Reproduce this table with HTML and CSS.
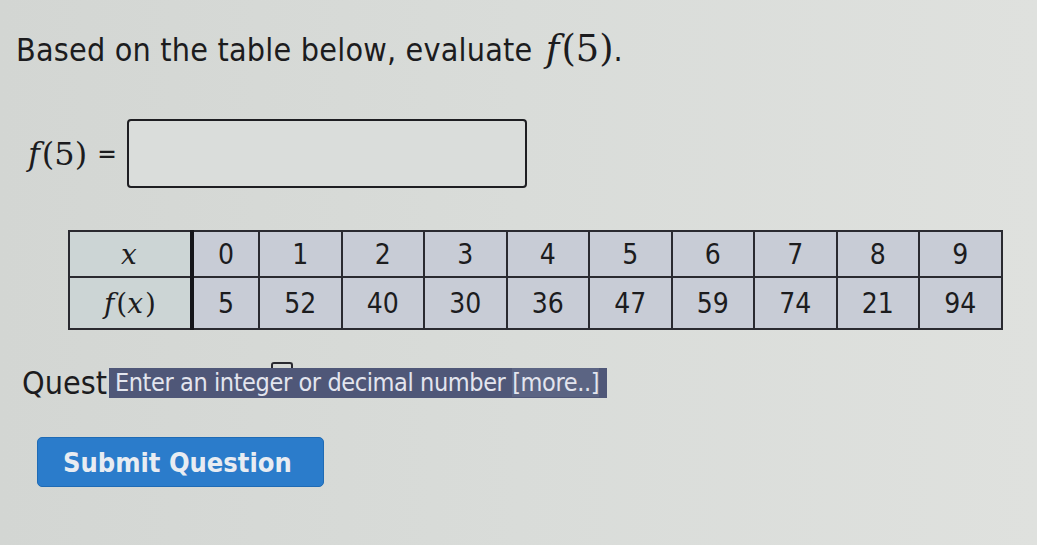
FILE: index.html
```html
<!DOCTYPE html>
<html>
<head>
<meta charset="utf-8">
<link rel="stylesheet" href="styles.css">
</head>
<body>
<div class="page">
  <p class="prompt">Based on the table below, evaluate <span class="math big"><i>f</i>(5)</span>.</p>

  <div class="answer">
    <span class="math label"><i>f</i>(5)</span><span class="eq">=</span>
    <div class="input"></div>
  </div>

  <table class="values">
    <tr>
      <th><span class="math"><i>x</i></span></th>
      <td class="first">0</td><td>1</td><td>2</td><td>3</td><td>4</td><td>5</td><td>6</td><td>7</td><td>8</td><td>9</td>
    </tr>
    <tr>
      <th><span class="math"><i>f</i>(<i>x</i>)</span></th>
      <td class="first">5</td><td>52</td><td>40</td><td>30</td><td>36</td><td>47</td><td>59</td><td>74</td><td>21</td><td>94</td>
    </tr>
  </table>

  <div class="quest">
    <span class="quest-text">Quest</span>
    <span class="tip">Enter an integer or decimal number <span class="more">[more..]</span><span class="caret"></span></span>
  </div>

  <button class="submit">Submit Question</button>
</div>
</body>
</html>
```

FILE: styles.css
```css
html, body {
  margin: 0;
  padding: 0;
}
body {
  width: 1037px;
  height: 545px;
  overflow: hidden;
  background: linear-gradient(90deg, #d3d6d3 0%, #d9dcd9 50%, #dfe1de 100%);
  font-family: "DejaVu Sans Condensed", "DejaVu Sans", sans-serif;
  color: #1c1c1e;
}
.page {
  padding: 24px 0 0 16px;
}
.prompt {
  margin: 0;
  font-size: 32px;
  line-height: 50px;
  letter-spacing: 0.2px;
}
.math {
  font-family: "DejaVu Serif", "Liberation Serif", serif;
  letter-spacing: 0;
}
.math.big {
  font-size: 1.15em;
  margin-left: 4px;
}
.math i {
  font-family: "DejaVu Serif", serif;
  font-style: italic;
  padding-right: 2px;
}
.answer {
  margin-top: 44px;
  margin-left: 12px;
  display: flex;
  align-items: center;
}
.label {
  font-size: 32px;
}
.eq {
  font-size: 26px;
  margin-left: 10px;
}
.input {
  margin-left: 10px;
  width: 396px;
  height: 65px;
  border: 2px solid #1e1e22;
  border-radius: 4px;
  background: #dadddb;
}
.values {
  margin-top: 42px;
  margin-left: 52px;
  border-collapse: collapse;
  font-size: 28px;
}
.values th, .values td {
  border: 2px solid #2a2a30;
  background: #c8ccd6;
  height: 44px;
  padding: 0;
  text-align: center;
  font-weight: normal;
  width: 80.5px;
}
.values tr:last-child th, .values tr:last-child td {
  height: 50px;
}
.values th {
  width: 120px;
  background: #ccd5d5;
  border-right: 4px solid #15151a;
  font-size: 28px;
}
.values td.first {
  width: 64px;
}
.quest {
  margin-top: 34px;
  margin-left: 6px;
  display: flex;
  align-items: center;
}
.quest-text {
  font-size: 32px;
}
.tip {
  position: relative;
  margin-left: 2px;
  background: #4f5778;
  color: #e3e5ee;
  font-size: 25px;
  padding: 1px 8px 1px 6px;
  letter-spacing: -0.4px;
  line-height: 28px;
}
.more {
  background: #5b6483;
}
.caret {
  position: absolute;
  left: 162px;
  top: -6px;
  width: 18px;
  height: 4px;
  border: 2px solid #2a2a30;
  border-bottom: none;
  border-radius: 3px 3px 0 0;
}
.submit {
  margin-top: 35px;
  margin-left: 21px;
  width: 287px;
  height: 50px;
  background: #2b7ccb;
  border: 1px solid #1f6bb5;
  border-radius: 5px;
  color: #e8ecf2;
  font-family: "DejaVu Sans Condensed", "DejaVu Sans", sans-serif;
  font-weight: bold;
  font-size: 27px;
  text-align: left;
  padding: 0 0 0 25px;
}
```
